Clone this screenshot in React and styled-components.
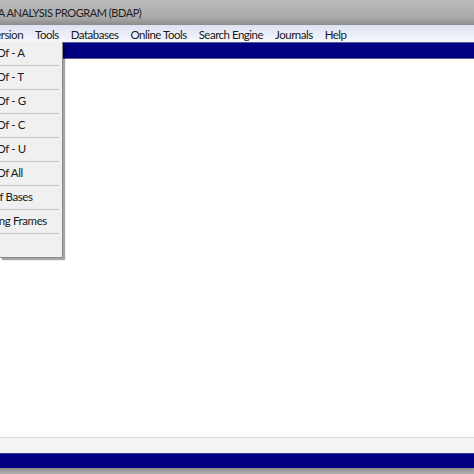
import React from "react";
import styled, { createGlobalStyle } from "styled-components";

const Global = createGlobalStyle`
  body {
    margin: 0;
    overflow: hidden;
    font-family: Lato, "Open Sans", sans-serif;
  }
`;

const Win = styled.div`
  width: 474px;
  height: 474px;
  display: flex;
  flex-direction: column;
  background: #ffffff;
  overflow: hidden;
`;

const TitleBar = styled.div`
  height: 25px;
  flex: none;
  background: linear-gradient(#bcbcbc, #aaaaaa 70%, #8c8c8c);
  color: #1e1e1e;
  font-size: 11px;
  letter-spacing: -0.45px;
  line-height: 25px;
  white-space: nowrap;
  text-indent: -18px;
`;

const MenuBar = styled.div`
  height: 17px;
  flex: none;
  display: flex;
  background: linear-gradient(#dde2f1, #f5f7fc);
  font-size: 11.5px;
  letter-spacing: -0.5px;
  line-height: 19px;
  color: #1a1a1a;
  white-space: nowrap;
`;

const MenuItem = styled.div`
  padding: 0 6px;
  margin-left: ${({ $first }) => ($first ? "-35px" : "0")};
`;

const Body = styled.div`
  flex: 1;
  position: relative;
  display: flex;
  flex-direction: column;
`;

const NavyStrip = styled.div`
  height: 15px;
  background: #000080;
  border-top: 1px solid #5a5a9a;
  border-bottom: 1px solid #5a5a8a;
`;

const Dropdown = styled.div`
  position: absolute;
  left: 0;
  top: 0;
  width: 62px;
  background: #f0f0f0;
  border-right: 1px solid #8a8a8a;
  border-bottom: 1px solid #8a8a8a;
  box-shadow: 2px 2px 1px rgba(0, 0, 0, 0.35);
  font-size: 11.5px;
  letter-spacing: -0.4px;
  color: #1a1a1a;
  overflow: hidden;
`;

const DropItem = styled.div`
  height: 23px;
  line-height: 22px;
  white-space: nowrap;
  text-indent: ${({ $indent }) => $indent}px;
  border-bottom: 1px solid #c6c6c6;
  margin-right: 3px;
  &:last-child {
    border-bottom: none;
  }
`;

const Spacer = styled.div`
  flex: 1;
  background: #ffffff;
`;

const StatusBar = styled.div`
  height: 15px;
  flex: none;
  background: #f4f4f2;
  border-top: 1px solid #dcdcdc;
`;

const BottomNavy = styled.div`
  height: 14px;
  flex: none;
  background: #000080;
  border-top: 1px solid #3a3aa0;
`;

const BottomEdge = styled.div`
  height: 6px;
  flex: none;
  background: linear-gradient(#8f8f8f, #b0b0b0);
`;

const menu = [
  { label: "Conversion", first: true },
  { label: "Tools" },
  { label: "Databases" },
  { label: "Online Tools" },
  { label: "Search Engine" },
  { label: "Journals" },
  { label: "Help" },
];

const items = [
  { label: "Count Of - A", indent: -35 },
  { label: "Count Of - T", indent: -35 },
  { label: "Count Of - G", indent: -35 },
  { label: "Count Of - C", indent: -35 },
  { label: "Count Of - U", indent: -35 },
  { label: "Count Of All", indent: -35 },
  { label: "Count of Bases", indent: -38 },
  { label: "Reading Frames", indent: -27 },
  { label: "", indent: 0 },
];

export default function App() {
  return (
    <>
      <Global />
      <Win>
        <TitleBar>DNA ANALYSIS PROGRAM (BDAP)</TitleBar>
        <MenuBar>
          {menu.map((m) => (
            <MenuItem key={m.label} $first={m.first}>
              {m.label}
            </MenuItem>
          ))}
        </MenuBar>
        <Body>
          <NavyStrip />
          <Spacer />
          <Dropdown>
            {items.map((it, i) => (
              <DropItem key={i} $indent={it.indent}>
                {it.label || "\u00a0"}
              </DropItem>
            ))}
          </Dropdown>
        </Body>
        <StatusBar />
        <BottomNavy />
        <BottomEdge />
      </Win>
    </>
  );
}
